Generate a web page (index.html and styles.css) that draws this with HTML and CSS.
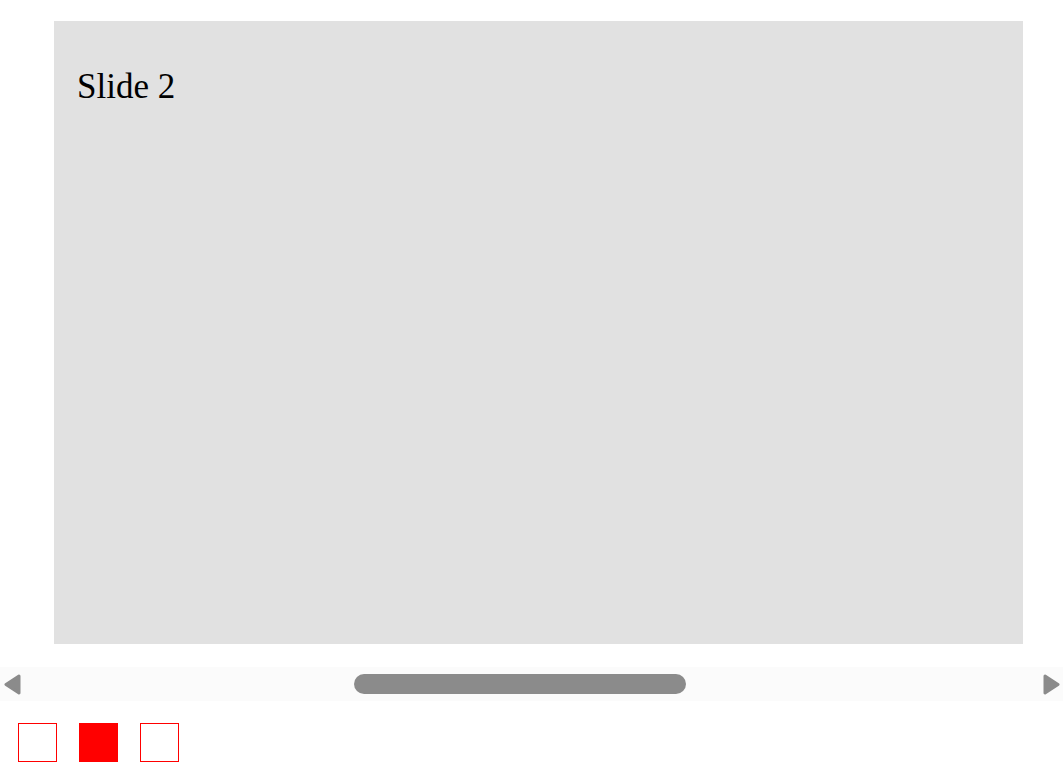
FILE: index.html
```html
<!DOCTYPE html>
<html lang="en">
<head>
<meta charset="utf-8">
<title>Carousel</title>
<link rel="stylesheet" href="styles.css">
</head>
<body>
<div class="carousel">
  <div class="viewport">
    <div class="slide"><span class="slide-title">Slide 2</span></div>
  </div>
  <div class="scrollbar">
    <div class="sb-btn sb-left">
      <svg width="17" height="21" viewBox="0 0 17 21"><path d="M15 2 L2 10.5 L15 19 Z" fill="#8b8b8b" stroke="#8b8b8b" stroke-width="3" stroke-linejoin="round"/></svg>
    </div>
    <div class="sb-track"><div class="sb-thumb"></div></div>
    <div class="sb-btn sb-right">
      <svg width="17" height="21" viewBox="0 0 17 21"><path d="M2 2 L15 10.5 L2 19 Z" fill="#8b8b8b" stroke="#8b8b8b" stroke-width="3" stroke-linejoin="round"/></svg>
    </div>
  </div>
  <div class="dots">
    <span class="dot"></span>
    <span class="dot active"></span>
    <span class="dot"></span>
  </div>
</div>
</body>
</html>
```
FILE: styles.css
```css
html, body {
  margin: 0;
  padding: 0;
  background: #ffffff;
  font-family: "Liberation Serif", "Times New Roman", serif;
}
.carousel {
  padding-top: 21px;
}
.viewport {
  padding: 0 40px 0 54px;
}
.slide {
  height: 623px;
  box-sizing: border-box;
  background: #e1e1e1;
  padding: 46px 0 0 23px;
}
.slide-title {
  font-size: 35px;
  color: #000;
  line-height: normal;
}
.scrollbar {
  margin-top: 23px;
  height: 34px;
  background: #fbfbfb;
  display: flex;
  align-items: center;
}
.sb-btn {
  display: flex;
  align-items: center;
  height: 100%;
}
.sb-btn svg {
  display: block;
}
.sb-left {
  width: 26px;
  padding-left: 4px;
  box-sizing: border-box;
}
.sb-right {
  width: 22px;
  padding-left: 2px;
  box-sizing: border-box;
}
.sb-track {
  flex: 1;
  display: flex;
  align-items: center;
  height: 100%;
}
.sb-thumb {
  margin-left: 328px;
  width: 332px;
  height: 20px;
  border-radius: 10px;
  background: #8b8b8b;
}
.dots {
  display: flex;
  gap: 22px;
  padding-left: 18px;
  margin-top: 22px;
}
.dot {
  width: 39px;
  height: 39px;
  box-sizing: border-box;
  border: 1.5px solid #ff0000;
  background: #ffffff;
}
.dot.active {
  background: #ff0000;
}
```
